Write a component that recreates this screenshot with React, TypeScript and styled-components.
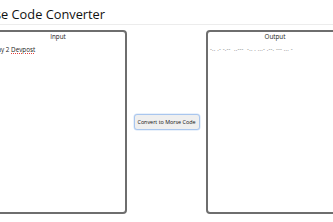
import React from "react";
import styled, { createGlobalStyle } from "styled-components";

const Global = createGlobalStyle`
  html, body { margin: 0; padding: 0; background: #fff; }
  body { font-family: "Open Sans", "Liberation Sans", sans-serif; overflow: hidden; }
`;

const Viewport = styled.div`
  width: 100%;
  display: flex;
  justify-content: center;
  overflow: hidden;
`;

const Page = styled.div`
  flex: 0 0 396px;
  width: 396px;
  display: flex;
  flex-direction: column;
`;

const Header = styled.header`
  height: 25px;
  border-bottom: 1px solid #ececec;
  display: flex;
  align-items: center;
  padding-left: 2px;
  padding-top: 3px;
  box-sizing: border-box;
`;

const Title = styled.h1`
  margin: 0;
  font-family: "Open Sans", sans-serif;
  font-weight: 400;
  font-size: 12.8px;
  color: #111;
`;

const Row = styled.main`
  display: flex;
  justify-content: center;
  align-items: center;
  margin-top: 5px;
  height: 184px;
`;

const Panel = styled.section`
  flex: 0 0 138px;
  width: 138px;
  height: 184px;
  box-sizing: border-box;
  border: 2px solid #6e6e6e;
  border-radius: 4px;
  display: flex;
  flex-direction: column;
  align-items: stretch;
  padding: 1px 2px;
`;

const Label = styled.div`
  text-align: center;
  font-family: "Open Sans", sans-serif;
  font-size: 6.3px;
  line-height: 8px;
  color: #222;
`;

const Content = styled.div<{ $mono?: boolean }>`
  margin-top: 5px;
  font-family: "Open Sans", sans-serif;
  font-size: ${(p) => (p.$mono ? "5.8px" : "6.3px")};
  line-height: 7px;
  color: ${(p) => (p.$mono ? "#555" : "#222")};
  white-space: pre;
  letter-spacing: ${(p) => (p.$mono ? "0.2px" : "0")};
`;

const Misspelled = styled.span`
  text-decoration: underline dotted #e04040;
  text-decoration-thickness: 0.7px;
  text-underline-offset: 1px;
`;

const Middle = styled.div`
  flex: 0 0 79px;
  display: flex;
  justify-content: center;
  align-items: center;
`;

const Button = styled.button`
  width: 66px;
  height: 16px;
  padding: 0;
  font-family: "Open Sans", sans-serif;
  font-size: 5.4px;
  color: #111;
  background: #efefef;
  border: 1px solid #a9c6ee;
  border-radius: 3px;
  box-shadow: 0 0 0 0.5px #d3e3f8;
`;

export default function App() {
  return (
    <>
      <Global />
      <Viewport>
        <Page>
          <Header>
            <Title>Morse Code Converter</Title>
          </Header>
          <Row>
            <Panel>
              <Label>Input</Label>
              <Content>
                Day 2 <Misspelled>Devpost</Misspelled>
              </Content>
            </Panel>
            <Middle>
              <Button>Convert to Morse Code</Button>
            </Middle>
            <Panel>
              <Label>Output</Label>
              <Content $mono>{"-.. .- -.--  ..---  -.. . ...- .--. --- ... -"}</Content>
            </Panel>
          </Row>
        </Page>
      </Viewport>
    </>
  );
}
